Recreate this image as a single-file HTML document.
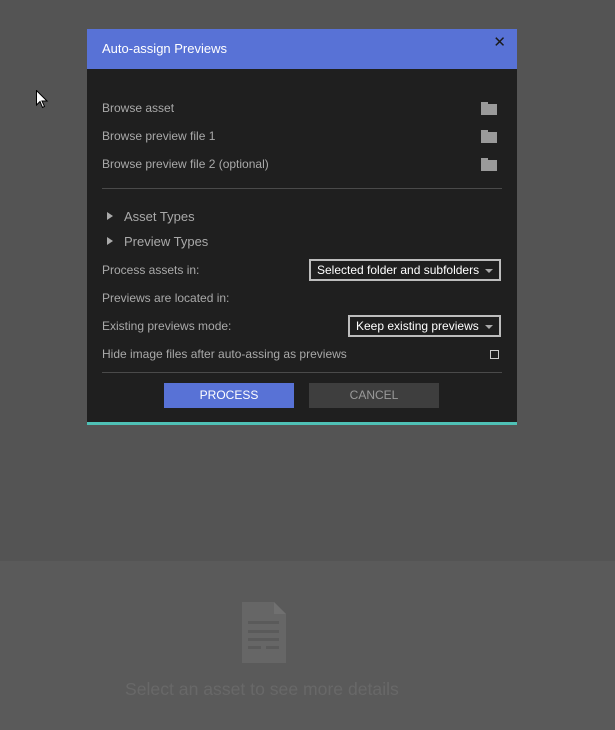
<!DOCTYPE html>
<html><head><style>
body{margin:0;width:615px;height:730px;background:#545454;position:relative;overflow:hidden;font-family:"Liberation Sans",sans-serif;}
.bottom{position:absolute;left:0;top:561px;width:615px;height:169px;background:#5a5a5a;}
.dlg{position:absolute;left:87px;top:29px;width:430px;height:396px;background:#1f1f1f;border-bottom:3px solid #4fc1b6;box-sizing:border-box;}
.hdr{height:40px;background:#5872d6;color:#fff;font-size:13px;line-height:40px;padding-left:15px;position:relative}
.x{position:absolute;right:11px;top:-6px;font-size:15px;color:#1a1a1a}
.t{position:absolute;font-size:12px;color:#a9a9a9;}
.fold{position:absolute;left:394px;width:16px;height:11px;background:#9a9a9a;}
.fold:before{content:"";position:absolute;left:0;top:-2px;width:7px;height:2px;background:#9a9a9a}
.line{position:absolute;left:15px;width:400px;height:1px;background:#4a4a4a}
.sel{position:absolute;border:2px solid #bdbdbd;color:#fff;font-size:12px;height:18px;line-height:18px;padding-left:6px;box-sizing:content-box}
.sel:after{content:"";position:absolute;right:6px;top:8px;border:4px solid transparent;border-top:4px solid #aaa;border-bottom:0}
.tri{position:absolute;left:20px;width:0;height:0;border-left:6px solid #aaa;border-top:4px solid transparent;border-bottom:4px solid transparent}
.btn{position:absolute;top:354px;width:130px;height:25px;line-height:25px;text-align:center;font-size:12px}
</style></head><body>
<svg style="position:absolute;left:36px;top:90px" width="12" height="19" viewBox="0 0 12 19"><path d="M0.5 0.5 L0.5 15 L4 11.5 L6.5 17.5 L8.5 16.5 L6 11 L11 11 Z" fill="#fff" stroke="#000" stroke-width="1"/></svg>
<div class="dlg">
<div class="hdr">Auto-assign Previews<span class="x">✕</span></div>
<div class="t" style="left:15px;top:72px">Browse asset</div><div class="fold" style="top:75px"></div>
<div class="t" style="left:15px;top:100px">Browse preview file 1</div><div class="fold" style="top:103px"></div>
<div class="t" style="left:15px;top:128px">Browse preview file 2 (optional)</div><div class="fold" style="top:131px"></div>
<div class="line" style="top:159px"></div>
<div class="tri" style="top:183px"></div><div class="t" style="left:37px;top:180px;font-size:13px">Asset Types</div>
<div class="tri" style="top:208px"></div><div class="t" style="left:37px;top:205px;font-size:13px">Preview Types</div>
<div class="t" style="left:15px;top:234px">Process assets in:</div>
<div class="sel" style="left:222px;top:230px;width:182px">Selected folder and subfolders</div>
<div class="t" style="left:15px;top:262px">Previews are located in:</div>
<div class="t" style="left:15px;top:290px">Existing previews mode:</div>
<div class="sel" style="left:261px;top:286px;width:143px">Keep existing previews</div>
<div class="t" style="left:15px;top:318px">Hide image files after auto-assing as previews</div>
<div style="position:absolute;left:403px;top:321px;width:7px;height:7px;border:1px solid #ccc"></div>
<div class="line" style="top:343px"></div>
<div class="btn" style="left:77px;background:#5872d6;color:#fff">PROCESS</div>
<div class="btn" style="left:222px;background:#3e3e3e;color:#9a9a9a">CANCEL</div>
</div>
<div class="bottom">
<svg style="position:absolute;left:242px;top:41px" width="44" height="61" viewBox="0 0 44 61"><path d="M0 0 H32 L44 12 V61 H0 Z" fill="#666"/><path d="M32 0 L44 12 H32Z" fill="#707070"/><g fill="#5a5a5a"><rect x="6" y="19" width="31" height="3"/><rect x="6" y="28" width="31" height="3"/><rect x="6" y="36" width="31" height="3"/><rect x="6" y="44" width="13" height="3"/><rect x="24" y="44" width="13" height="3"/></g></svg>
<div style="position:absolute;left:125px;top:118px;font-size:17.6px;color:#686868">Select an asset to see more details</div>
</div>
</body></html>
